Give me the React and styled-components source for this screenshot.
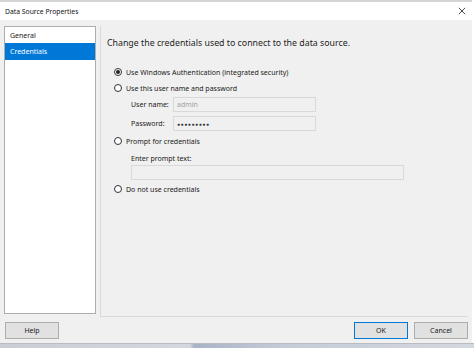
import React from "react";
import styled, { createGlobalStyle } from "styled-components";

const Global = createGlobalStyle`
  html, body { margin: 0; padding: 0; background: #ffffff; }
  body { font-family: "Noto Sans", "Open Sans", sans-serif; color: #1a1a1a; }
  * { box-sizing: border-box; }
`;

const Window = styled.div`
  width: 474px;
  height: 348px;
  display: flex;
  flex-direction: column;
  overflow: hidden;
`;

const TitleBar = styled.div`
  height: 20px;
  border-top: 2px solid #d4d4d4;
  background: #ffffff;
  display: flex;
  align-items: center;
  justify-content: space-between;
  padding: 0 6px 0 5px;
  margin-right: 2px;
`;

const Title = styled.span`
  font-size: 6.8px;
  color: #111;
`;

const Close = styled.svg`
  width: 8px;
  height: 8px;
`;

const Body = styled.div`
  flex: 1;
  background: #f0f0f0;
  margin-right: 2px;
  display: flex;
  flex-direction: column;
  padding: 6px 4px 3px 4px;
`;

const Main = styled.div`
  flex: 1;
  display: flex;
  gap: 4px;
`;

const NavList = styled.div`
  width: 92px;
  height: 288px;
  background: #ffffff;
  border: 1px solid #adadad;
  display: flex;
  flex-direction: column;
  padding-top: 1px;
`;

const NavItem = styled.div`
  height: ${(p) => (p.$active ? "17px" : "15px")};
  display: flex;
  align-items: center;
  padding-left: 5px;
  font-size: 7px;
  background: ${(p) => (p.$active ? "#0078d7" : "transparent")};
  color: ${(p) => (p.$active ? "#ffffff" : "#1a1a1a")};
`;

const Panel = styled.div`
  flex: 1;
  height: 291px;
  border-left: 1px solid #d9d9d9;
  border-bottom: 1px solid #d9d9d9;
  padding: 10px 0 0 6px;
  display: flex;
  flex-direction: column;
`;

const Heading = styled.div`
  font-size: 8.8px;
  color: #1e1e1e;
  height: 14px;
  display: flex;
  align-items: center;
`;

const Options = styled.div`
  margin-top: 14px;
  padding-left: 7px;
  display: flex;
  flex-direction: column;
`;

const RadioRow = styled.label`
  display: flex;
  align-items: center;
  gap: 4px;
  height: 16px;
  font-size: 7px;
  color: #1a1a1a;
`;

const RadioCircle = styled.span`
  width: 8px;
  height: 8px;
  border-radius: 50%;
  border: 1px solid #333;
  background: #fff;
  display: flex;
  align-items: center;
  justify-content: center;
  &::after {
    content: "";
    width: 4px;
    height: 4px;
    border-radius: 50%;
    background: ${(p) => (p.$checked ? "#222" : "transparent")};
  }
`;

const FieldGrid = styled.div`
  display: grid;
  grid-template-columns: 42px 143px;
  row-gap: 4px;
  align-items: center;
  padding-left: 17px;
  margin: 1px 0 2px;
`;

const FieldLabel = styled.span`
  font-size: 7px;
  color: #1a1a1a;
`;

const PromptLabel = styled(FieldLabel)`
  height: 14px;
  margin-top: 2px;
  display: flex;
  align-items: center;
`;

const TextBox = styled.div`
  height: 15px;
  border: 1px solid #d9d9d9;
  background: #f0f0f0;
  font-size: ${(p) => (p.$dots ? "5px" : "7px")};
  letter-spacing: ${(p) => (p.$dots ? "0.6px" : "0")};
  color: ${(p) => (p.$dim ? "#a0a0a0" : "#333")};
  display: flex;
  align-items: center;
  padding-left: 3px;
  width: ${(p) => p.$w || "auto"};
`;

const PromptBlock = styled.div`
  padding-left: 17px;
  display: flex;
  flex-direction: column;
  margin-bottom: 1px;
`;

const Footer = styled.div`
  height: 20px;
  display: flex;
  align-items: center;
  padding: 0 0 0 1px;
  gap: 6px;
`;

const Spacer = styled.div`
  flex: 1;
`;

const Button = styled.button`
  width: 54px;
  height: 17px;
  font-family: inherit;
  font-size: 7px;
  color: #1a1a1a;
  background: #e1e1e1;
  border: 1px solid ${(p) => (p.$primary ? "#0078d7" : "#adadad")};
  padding: 0;
`;

const Desktop = styled.div`
  height: 5px;
  border-top: 1px solid #b9bcc2;
  background: linear-gradient(90deg, #c9cdd6 0%, #d3d7df 40%, #a9b3c6 41%, #c5ccd9 60%, #d3d7df 100%);
`;

function Radio({ checked, children }) {
  return (
    <RadioRow>
      <RadioCircle $checked={checked} />
      {children}
    </RadioRow>
  );
}

export default function App() {
  return (
    <>
      <Global />
      <Window>
        <TitleBar>
          <Title>Data Source Properties</Title>
          <Close viewBox="0 0 10 10">
            <path d="M1 1 L9 9 M9 1 L1 9" stroke="#333" strokeWidth="1.1" />
          </Close>
        </TitleBar>
        <Body>
          <Main>
            <NavList>
              <NavItem>General</NavItem>
              <NavItem $active>Credentials</NavItem>
            </NavList>
            <Panel>
              <Heading>Change the credentials used to connect to the data source.</Heading>
              <Options>
                <Radio checked>Use Windows Authentication (integrated security)</Radio>
                <Radio>Use this user name and password</Radio>
                <FieldGrid>
                  <FieldLabel>User name:</FieldLabel>
                  <TextBox $dim>admin</TextBox>
                  <FieldLabel>Password:</FieldLabel>
                  <TextBox $dots>●●●●●●●●●</TextBox>
                </FieldGrid>
                <Radio>Prompt for credentials</Radio>
                <PromptBlock>
                  <PromptLabel>Enter prompt text:</PromptLabel>
                  <TextBox $w="273px" />
                </PromptBlock>
                <Radio>Do not use credentials</Radio>
              </Options>
            </Panel>
          </Main>
          <Footer>
            <Button>Help</Button>
            <Spacer />
            <Button $primary>OK</Button>
            <Button>Cancel</Button>
          </Footer>
        </Body>
        <Desktop />
      </Window>
    </>
  );
}
